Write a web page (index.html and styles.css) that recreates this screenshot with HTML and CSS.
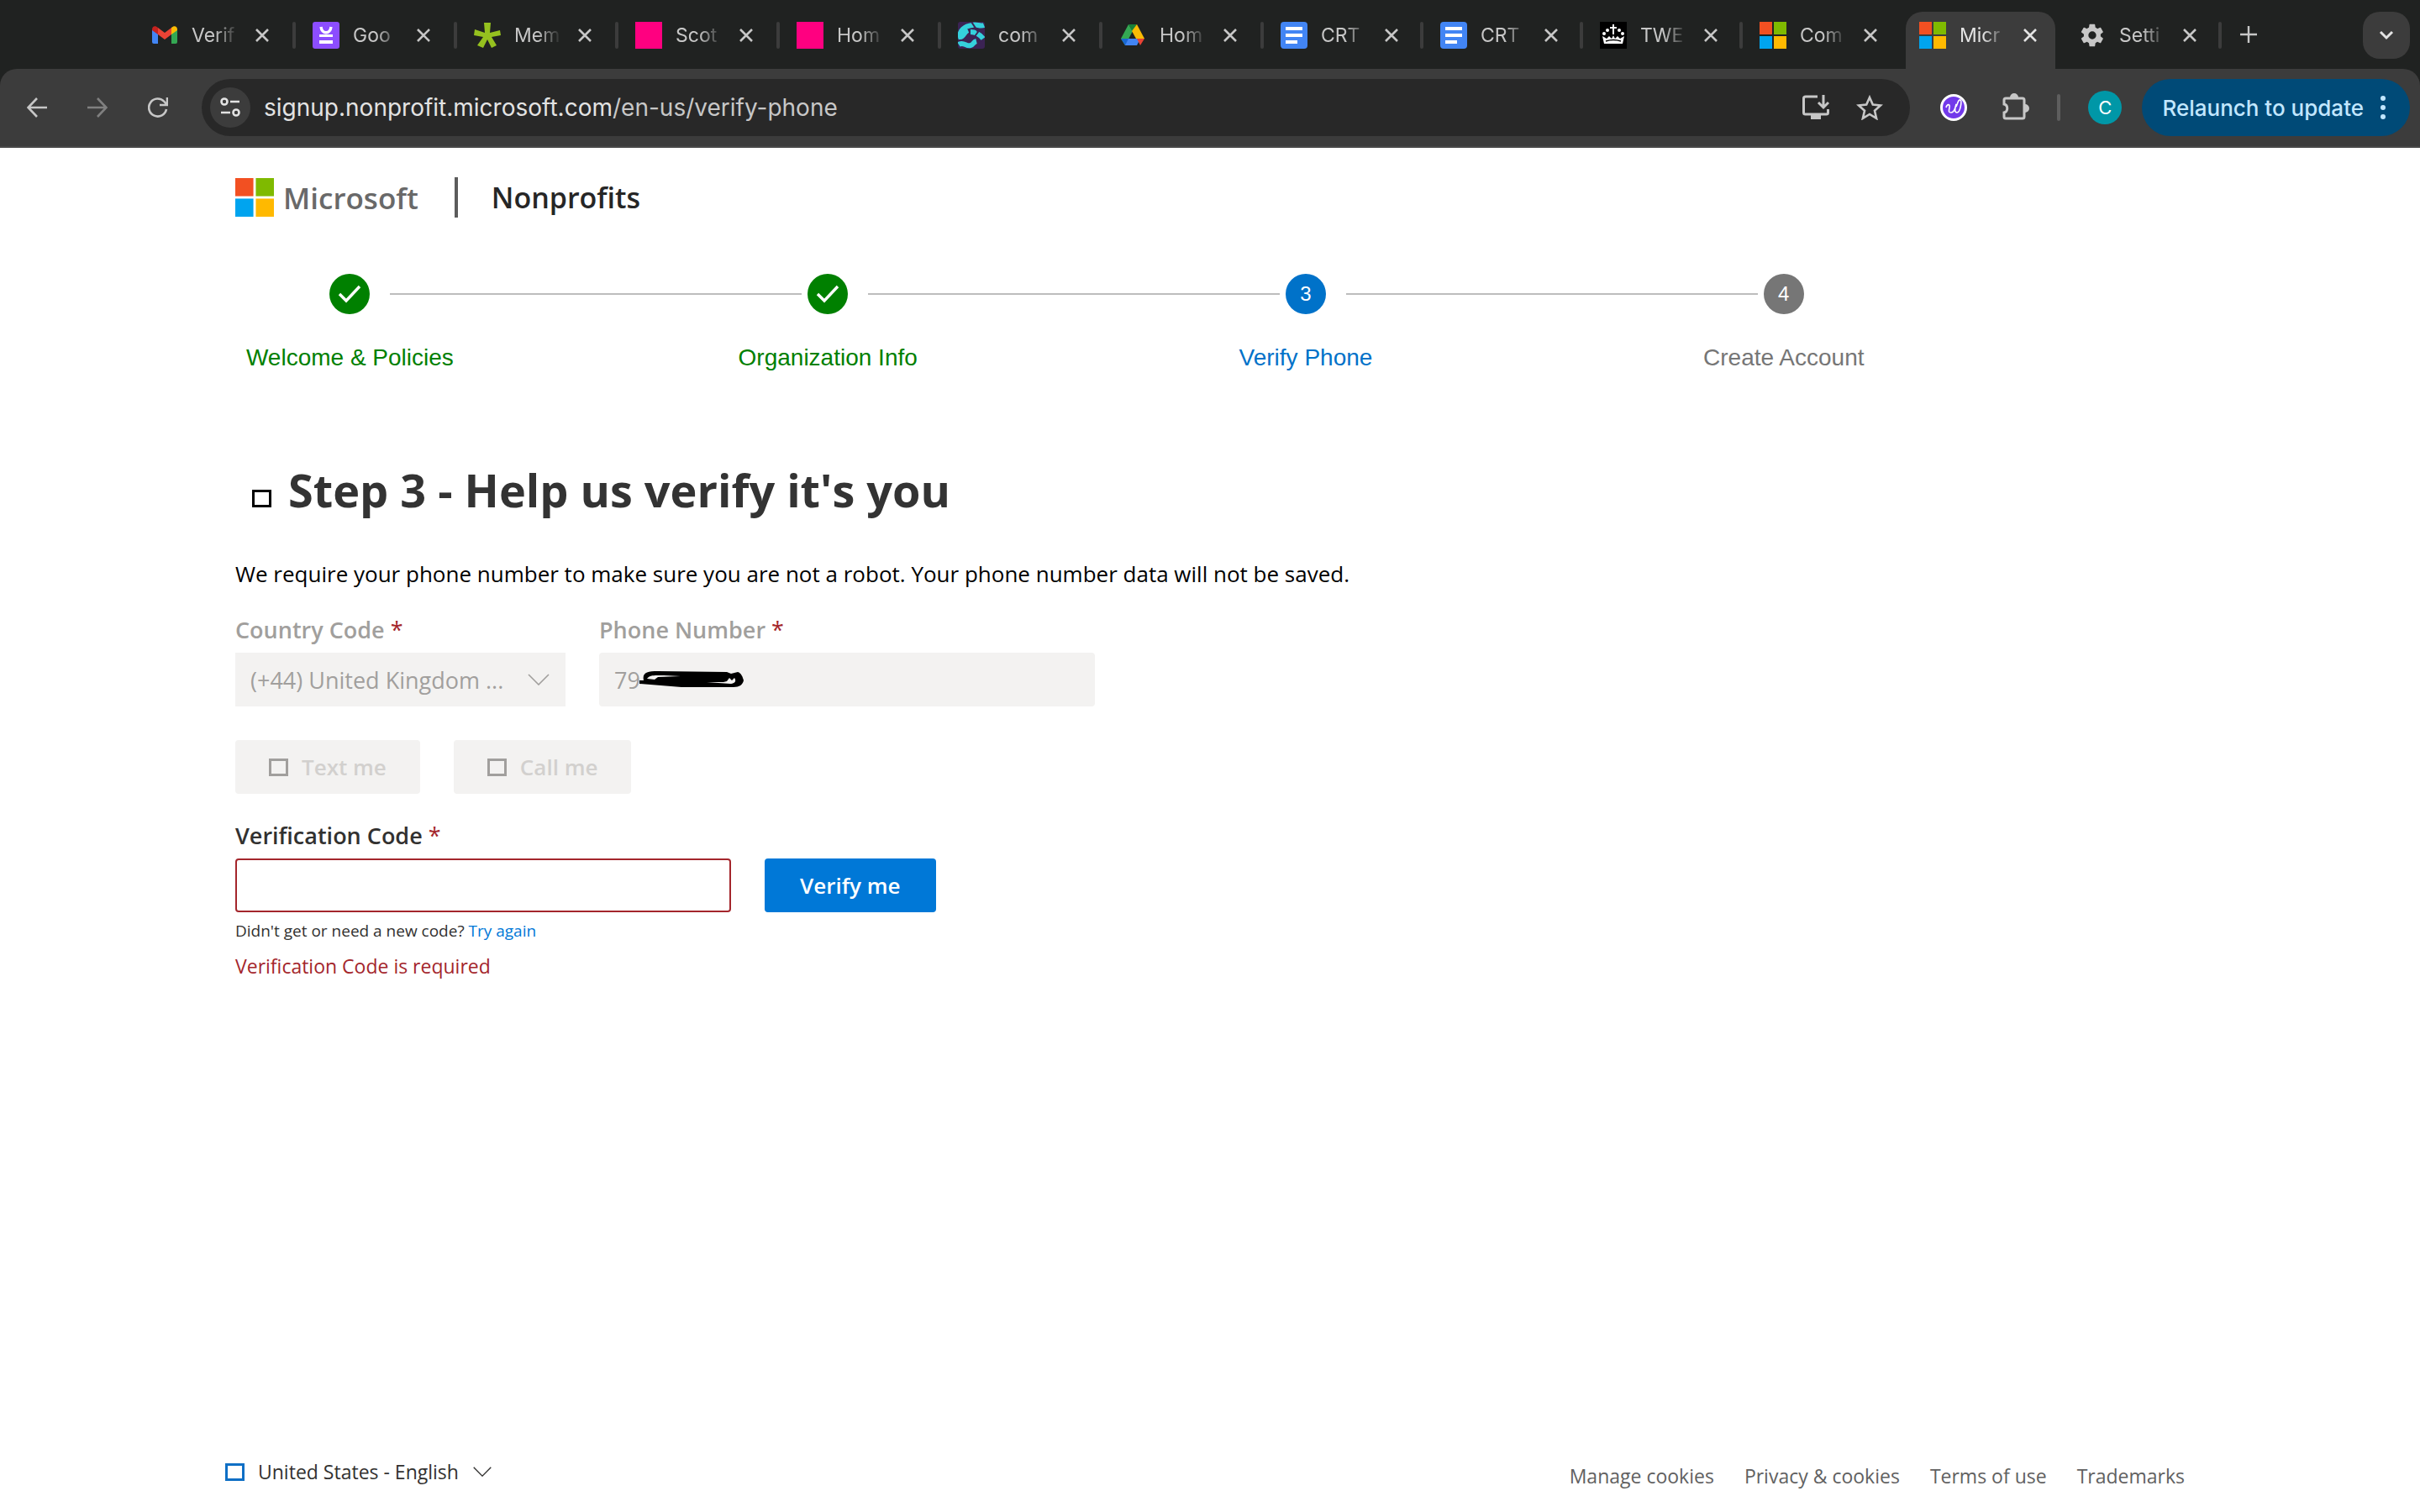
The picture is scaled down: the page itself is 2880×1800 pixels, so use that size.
FILE: index.html
```
<!DOCTYPE html>
<html lang="en">
<head>
    <meta charset="UTF-8">
    <meta name="viewport" content="width=device-width, initial-scale=1.0">
    <title>Microsoft Nonprofits - Verify Phone</title>
    <link rel="stylesheet" href="styles.css">
</head>
<body>
    <!-- shared icons -->
    <svg class="sprite" aria-hidden="true">
        <symbol id="close" viewBox="0 0 16 16"><path d="M1 1l14 14M15 1L1 15" fill="none" stroke="currentColor" stroke-width="2.6"/></symbol>
        <symbol id="ms" viewBox="0 0 32 32">
            <path fill="#f25022" d="M0 0h15v15H0z"/><path fill="#7fba00" d="M17 0h15v15H17z"/>
            <path fill="#00a4ef" d="M0 17h15v15H0z"/><path fill="#ffb900" d="M17 17h15v15H17z"/>
        </symbol>
        <symbol id="docs" viewBox="0 0 32 32"><rect width="32" height="32" rx="4" fill="#4285f4"/><path d="M6 6h20v4H6zM6 14h20v4H6zM6 22h14v4H6z" fill="#fff"/></symbol>
        <symbol id="chevron" viewBox="0 0 26 14"><path d="M1 1l12 12L25 1" fill="none" stroke="currentColor" stroke-width="1.6"/></symbol>
        <symbol id="check" viewBox="0 0 28 22"><path d="M2 11l8 8L26 2" fill="none" stroke="#fff" stroke-width="3.4"/></symbol>
    </svg>

    <div class="browser">
        <div class="tab-strip">
            <div class="tab">
                <svg class="favicon" viewBox="0 0 32 32"><path fill="#4285f4" d="M1 9v15a2 2 0 0 0 2 2h5V14z"/><path fill="#34a853" d="M31 9v15a2 2 0 0 1-2 2h-5V14z"/><path fill="#ea4335" d="M8 7l8 6 8-6v8l-8 6-8-6z"/><path fill="#c5221f" d="M1 9c0-4 4-5 7-2v8l-7-5z"/><path fill="#fbbc04" d="M31 9c0-4-4-5-7-2v8l7-5z"/></svg>
                <span class="tab-title">Verif</span>
                <button class="tab-close" aria-label="Close tab"><svg><use href="#close"/></svg></button>
            </div>
            <div class="tab">
                <svg class="favicon" viewBox="0 0 32 32"><rect width="32" height="32" rx="3" fill="#8c4dff"/><path d="M10 6c1 9 11 9 12 0" fill="none" stroke="#fff" stroke-width="3.4"/><path fill="#fff" d="M8 15h16v3H8zM8 22h16v4H8z"/></svg>
                <span class="tab-title">Goo</span>
                <button class="tab-close" aria-label="Close tab"><svg><use href="#close"/></svg></button>
            </div>
            <div class="tab">
                <svg class="favicon" viewBox="0 0 32 32"><path fill="#95c11f" d="M12 1h8l-1 12 12-3 1 6-11 2 6 10-6 3-5-10-5 10-7-3 7-10-11-2 1-7 12 4z"/></svg>
                <span class="tab-title">Mem</span>
                <button class="tab-close" aria-label="Close tab"><svg><use href="#close"/></svg></button>
            </div>
            <div class="tab">
                <span class="favicon pink"></span>
                <span class="tab-title">Scot</span>
                <button class="tab-close" aria-label="Close tab"><svg><use href="#close"/></svg></button>
            </div>
            <div class="tab">
                <span class="favicon pink"></span>
                <span class="tab-title">Hom</span>
                <button class="tab-close" aria-label="Close tab"><svg><use href="#close"/></svg></button>
            </div>
            <div class="tab">
                <svg class="favicon" viewBox="0 0 32 32"><rect width="32" height="32" rx="3" fill="#3b2354"/><path d="M31 4c-5 2-9-2-14 0C8 5 1 11 3 18c4 0 4-6 9-8M15 12c5 0 11 3 15 8M1 27c6-4 9 3 14 1 4-1 3-4 7-5" fill="none" stroke="#35d0dc" stroke-width="6"/><path d="M16 0l8 12-6 8" fill="none" stroke="#3b2354" stroke-width="2"/></svg>
                <span class="tab-title">com</span>
                <button class="tab-close" aria-label="Close tab"><svg><use href="#close"/></svg></button>
            </div>
            <div class="tab">
                <svg class="favicon" viewBox="0 0 32 32"><path fill="#34a853" d="M11 3l5 8-9 17-5-8z"/><path fill="#188038" d="M11 3h10l-5 9z"/><path fill="#fbbc04" d="M21 3l9 17H20l-5-9z"/><path fill="#4285f4" d="M7 20h18l-4 8H7z"/><path fill="#1967d2" d="M2 20h9l-4 8z"/><path fill="#ea4335" d="M21 20h9l-5 8z"/></svg>
                <span class="tab-title">Hom</span>
                <button class="tab-close" aria-label="Close tab"><svg><use href="#close"/></svg></button>
            </div>
            <div class="tab narrow">
                <svg class="favicon"><use href="#docs"/></svg>
                <span class="tab-title">CRT</span>
                <button class="tab-close" aria-label="Close tab"><svg><use href="#close"/></svg></button>
            </div>
            <div class="tab narrow">
                <svg class="favicon"><use href="#docs"/></svg>
                <span class="tab-title">CRT</span>
                <button class="tab-close" aria-label="Close tab"><svg><use href="#close"/></svg></button>
            </div>
            <div class="tab narrow">
                <svg class="favicon" viewBox="0 0 32 32"><path d="M0 0h32v32H0z"/><g fill="#fff"><path d="M5 26L3 17l5 3 3-3 3 3 2-4 2 4 3-3 3 3 5-3-2 9z"/><path d="M15 3h2v3h3v2h-3v7h-2V8h-3V6h3z"/><circle cx="5" cy="14" r="2"/><circle cx="9" cy="10" r="2"/><circle cx="23" cy="10" r="2"/><circle cx="27" cy="14" r="2"/></g><path d="M7 23q9-3 18 0" fill="none" stroke="#000" stroke-width="1.4"/></svg>
                <span class="tab-title">TWE</span>
                <button class="tab-close" aria-label="Close tab"><svg><use href="#close"/></svg></button>
            </div>
            <div class="tab narrow no-line">
                <svg class="favicon"><use href="#ms"/></svg>
                <span class="tab-title">Com</span>
                <button class="tab-close" aria-label="Close tab"><svg><use href="#close"/></svg></button>
            </div>
            <div class="tab narrow no-line active">
                <svg class="favicon"><use href="#ms"/></svg>
                <span class="tab-title">Micr</span>
                <button class="tab-close" aria-label="Close tab"><svg><use href="#close"/></svg></button>
            </div>
            <div class="tab narrow">
                <svg class="favicon" viewBox="0 0 24 24"><path fill="#c7c7c7" d="M19.4 13a7.500 7.500 0 0 0 0-2l2.100-1.600a.5.5 0 0 0 .1-.6l-2-3.500a.5.5 0 0 0-.6-.2l-2.500 1a7.300 7.300 0 0 0-1.700-1l-.4-2.600a.5.5 0 0 0-.5-.5h-4a.5.5 0 0 0-.5.500L9 5.100a7.600 7.600 0 0 0-1.700 1l-2.500-1a.5.5 0 0 0-.6.2l-2 3.500a.5.5 0 0 0 .1.600L4.500 11a8 8 0 0 0 0 2l-2.200 1.600a.5.5 0 0 0-.1.600l2 3.500c.1.200.4.300.6.200l2.500-1c.5.400 1.100.7 1.700 1l.4 2.600c0 .3.200.5.500.5h4c.3 0 .5-.2.500-.5l.4-2.600a7.300 7.300 0 0 0 1.700-1l2.500 1c.2.100.5 0 .6-.2l2-3.500a.5.5 0 0 0-.1-.6zM12 15.500a3.500 3.500 0 1 1 0-7 3.500 3.500 0 0 1 0 7z"/></svg>
                <span class="tab-title">Setti</span>
                <button class="tab-close" aria-label="Close tab"><svg><use href="#close"/></svg></button>
            </div>
            <button class="new-tab" aria-label="New tab"><svg viewBox="0 0 20 20" width="20" height="20"><path d="M10 0v20M0 10h20" stroke="currentColor" stroke-width="2.400"/></svg></button>
            <button class="tab-search" aria-label="Search tabs"><svg viewBox="0 0 18 12" width="18" height="12"><path d="M2 2l7 7 7-7" fill="none" stroke="currentColor" stroke-width="3"/></svg></button>
        </div>

        <div class="toolbar">
            <button class="nav-btn" aria-label="Back"><svg viewBox="0 0 24 24" width="24" height="24"><path d="M24 12H2M12 1L1.500 12 12 23" fill="none" stroke="currentColor" stroke-width="2.600"/></svg></button>
            <button class="nav-btn dim" aria-label="Forward"><svg viewBox="0 0 24 24" width="24" height="24"><path d="M0 12h22M12 1l10.500 11L12 23" fill="none" stroke="currentColor" stroke-width="2.600"/></svg></button>
            <button class="nav-btn" aria-label="Reload"><svg viewBox="0 0 24 24" width="24" height="24"><path d="M22 14a10.500 10.500 0 1 1-2.500-9l3 3.500M23 0v9h-9" fill="none" stroke="currentColor" stroke-width="2.600"/></svg></button>
            <div class="omnibox">
                <button class="site-info" aria-label="Site information"><svg viewBox="0 0 24 24" width="24" height="24" fill="none" stroke="currentColor" stroke-width="2.600"><circle cx="5" cy="5" r="3.500"/><path d="M12 5h11M1 18h11"/><circle cx="19" cy="18" r="3.500"/></svg></button>
                <span class="url">signup.nonprofit.microsoft.com<span class="path">/en-us/verify-phone</span></span>
                <button class="omni-btn" aria-label="Install app"><svg viewBox="0 0 32 30" width="32" height="30"><path d="M18 2H4Q1.500 2 1.500 4v17q0 2 2 2h25q2 0 2-2v-4" fill="none" stroke="currentColor" stroke-width="3"/><path d="M10 23h12v6H10z" fill="currentColor"/><path d="M25 0v14M19 9l6 6 6-6" fill="none" stroke="currentColor" stroke-width="3"/></svg></button>
                <button class="omni-btn" aria-label="Bookmark this tab"><svg viewBox="0 0 32 30" width="32" height="30"><path d="M16 3l3.800 8.600 9.200.9-7 6.200 2.100 9.200-8.100-4.900-8.100 4.900L10 18.700l-7-6.200 9.200-.9z" fill="none" stroke="currentColor" stroke-width="2.600"/></svg></button>
            </div>
            <button class="ext-btn" aria-label="Extension"><svg viewBox="0 0 32 32" width="32" height="32"><circle cx="16" cy="16" r="14.500" fill="#7239ea" stroke="#fff" stroke-width="3"/><path d="M7 16c1-4 5-5 4 0s-1 6 2 6 5-5 6-10c-2 6-2 10 1 10 4 0 6-14 4-15s-3 3-5 8" fill="none" stroke="#fff" stroke-width="1.600"/></svg></button>
            <button class="ext-btn" aria-label="Extensions"><svg viewBox="0 0 34 34" width="34" height="34"><path d="M5 6h20q2 0 2 2v20q0 2-2 2H5q-2 0-2-2v-5c5-1 5-9 0-10V8q0-2 2-2z" fill="none" stroke="currentColor" stroke-width="3"/><path d="M10 5a5 5 0 0 1 10 0zM28 13a5 5 0 0 1 0 10z" fill="currentColor"/></svg></button>
            <span class="toolbar-line"></span>
            <button class="avatar" aria-label="Profile">C</button>
            <button class="relaunch">Relaunch to update
                <svg viewBox="0 0 6 28" width="6" height="28" fill="currentColor"><circle cx="3" cy="3" r="3"/><circle cx="3" cy="14" r="3"/><circle cx="3" cy="25" r="3"/></svg>
            </button>
        </div>
    </div>

    <header class="header">
        <svg class="ms-logo"><use href="#ms"/></svg>
        <span class="wordmark">Microsoft</span>
        <span class="header-line"></span>
        <a class="site-name" href="#">Nonprofits</a>
    </header>

    <ol class="steps">
        <li class="step done">
            <div class="marker"><span class="dot"><svg width="28" height="22"><use href="#check"/></svg></span><span class="line after"></span></div>
            <span>Welcome &amp; Policies</span>
        </li>
        <li class="step done">
            <div class="marker"><span class="line before"></span><span class="dot"><svg width="28" height="22"><use href="#check"/></svg></span><span class="line after"></span></div>
            <span>Organization Info</span>
        </li>
        <li class="step current">
            <div class="marker"><span class="line before"></span><span class="dot">3</span><span class="line after"></span></div>
            <span>Verify Phone</span>
        </li>
        <li class="step">
            <div class="marker"><span class="line before"></span><span class="dot">4</span></div>
            <span>Create Account</span>
        </li>
    </ol>

    <main class="content">
        <h1><span class="box"></span>Step 3 - Help us verify it's you</h1>
        <p class="intro">We require your phone number to make sure you are not a robot. Your phone number data will not be saved.</p>

        <form>
            <div class="row">
                <div class="field country disabled">
                    <label for="country">Country Code <span class="star">*</span></label>
                    <div class="select">
                        <select id="country" disabled>
                            <option>(+44) United Kingdom ...</option>
                        </select>
                        <svg width="26" height="14"><use href="#chevron"/></svg>
                    </div>
                </div>
                <div class="field disabled">
                    <label for="phone">Phone Number <span class="star">*</span></label>
                    <div class="phone">
                        <input type="text" id="phone" value="79" disabled>
                        <svg class="scribble" viewBox="0 0 124 20" width="124" height="20"><path d="M0 11h5C3 2 9 0 22 0l82 1 5 2 8-2c4 1 6 6 7 10-1 5-5 8-12 8H50L0 15zM9 9c3-5 10-4 20-4l20 1-27 1-4 3zM80 13h20l4-1 3-4 3 3 3-3c3 4 0 7-5 7z" fill-rule="evenodd"/></svg>
                    </div>
                </div>
            </div>

            <div class="row buttons">
                <button type="button" class="btn" disabled><span class="box"></span>Text me</button>
                <button type="button" class="btn" disabled><span class="box"></span>Call me</button>
            </div>

            <div class="row verify">
                <div class="field">
                    <label for="code">Verification Code <span class="star">*</span></label>
                    <input type="text" id="code" class="invalid">
                </div>
                <button type="submit" class="btn primary">Verify me</button>
            </div>
            <p class="note">Didn't get or need a new code? <a href="#">Try again</a></p>
            <p class="error">Verification Code is required</p>
        </form>
    </main>

    <footer class="footer">
        <button class="language"><span class="box"></span>United States - English <svg width="24" height="12"><use href="#chevron"/></svg></button>
        <nav class="links">
            <a href="#">Manage cookies</a>
            <a href="#">Privacy &amp; cookies</a>
            <a href="#">Terms of use</a>
            <a href="#">Trademarks</a>
        </nav>
    </footer>
</body>
</html>
```
FILE: styles.css
```
* {
    box-sizing: border-box;
}
body {
    margin: 0;
    min-height: 100vh;
    display: flex;
    flex-direction: column;
    background: #fff;
    font-family: 'Open Sans', sans-serif;
    font-size: 26px;
    color: #323130;
}
button {
    padding: 0;
    border: none;
    background: none;
    color: inherit;
    font: inherit;
}
svg {
    display: block;
}
a {
    color: inherit;
    text-decoration: none;
}
.sprite {
    display: none;
}

/* browser */
.browser {
    background: #202221;
    color: #c7c7c7;
    font-family: Inter, sans-serif;
}
.tab-strip {
    height: 82px;
    padding: 14px 12px 0 160px;
    display: flex;
    font-size: 23px;
}
.tab {
    width: 192px;
    height: 56px;
    padding-left: 20px;
    display: flex;
    align-items: center;
}
.tab.narrow {
    width: 190px;
}
.tab::after {
    content: "";
    width: 4px;
    height: 32px;
    margin-left: auto;
    border-radius: 2px;
    background: #3c3c3c;
}
.tab.no-line::after {
    background: none;
}
.tab.active {
    width: 178px;
    height: 68px;
    margin: 0 8px 0 4px;
    padding: 0 0 12px 16px;
    border-radius: 20px 20px 0 0;
    background: #3c3c3c;
    color: #e3e3e3;
}
.favicon {
    width: 32px;
    height: 32px;
    flex: none;
}
.pink {
    background: #ff0080;
}
.tab-title {
    width: 56px;
    margin-left: 16px;
    overflow: hidden;
    white-space: nowrap;
    -webkit-mask-image: linear-gradient(to right, #000 50%, transparent);
    mask-image: linear-gradient(to right, #000 50%, transparent);
}
.tab-close {
    margin-left: 20px;
}
.tab-close svg {
    width: 16px;
    height: 16px;
}
.new-tab {
    height: 54px;
    margin-left: 22px;
}
.tab-search {
    width: 56px;
    height: 56px;
    margin-left: auto;
    display: grid;
    place-items: center;
    border-radius: 20px;
    background: #3c3c3c;
    color: #e3e3e3;
}
.toolbar {
    height: 94px;
    padding: 0 12px 0 8px;
    display: flex;
    align-items: center;
    border-bottom: 2px solid #484848;
    border-radius: 20px 20px 0 0;
    background: #3c3c3c;
}
.nav-btn {
    width: 72px;
    height: 56px;
    display: grid;
    place-items: center;
}
.dim {
    color: #808080;
}
.omnibox {
    flex: 1;
    height: 68px;
    margin-left: 16px;
    padding: 0 16px 0 10px;
    display: flex;
    align-items: center;
    border-radius: 34px;
    background: #282828;
}
.site-info {
    width: 48px;
    height: 48px;
    display: grid;
    place-items: center;
    border-radius: 50%;
    background: #3c3c3c;
    color: #e3e3e3;
}
.url {
    flex: 1;
    margin-left: 16px;
    color: #e3e3e3;
    font-size: 28px;
}
.path {
    color: #c7c7c7;
}
.omni-btn {
    width: 64px;
    display: grid;
    place-items: center;
}
.ext-btn {
    width: 74px;
    display: grid;
    place-items: center;
}
.omnibox + .ext-btn {
    margin-left: 15px;
}
.toolbar-line {
    width: 4px;
    height: 32px;
    margin: 0 33px 0 12px;
    border-radius: 2px;
    background: #5e5e5e;
}
.avatar {
    width: 40px;
    height: 40px;
    border-radius: 50%;
    background: #0097a7;
    color: #fff;
    font-size: 22px;
}
.relaunch {
    height: 68px;
    margin-left: 24px;
    padding: 0 29px 0 24px;
    display: flex;
    align-items: center;
    gap: 20px;
    border-radius: 34px;
    background: #004a77;
    color: #c2e7ff;
    font-size: 26px;
    font-weight: 500;
}

/* page header */
.header {
    height: 56px;
    margin: 31px 280px 0;
    display: flex;
    align-items: center;
}
.ms-logo {
    width: 46px;
    height: 46px;
}
.wordmark {
    margin-left: 11px;
    color: #696969;
    font-size: 35px;
    font-weight: 600;
}
.header-line {
    width: 4px;
    height: 48px;
    margin: 0 40px 0 43px;
    background: #5c5c5c;
}
.site-name {
    color: #262626;
    font-size: 34px;
    font-weight: 600;
}

/* steps */
.steps {
    width: 79%;
    margin: 63px 0 0 132px;
    padding: 0;
    display: grid;
    grid-template-columns: repeat(4, 1fr);
    list-style: none;
    font-family: 'Liberation Sans', sans-serif;
    font-size: 28px;
    line-height: 40px;
    text-align: center;
    color: #767676;
}
.marker {
    margin-bottom: 32px;
    display: grid;
    grid-template-columns: 1fr 48px 1fr;
    align-items: center;
}
.dot {
    grid-column: 2;
    width: 48px;
    height: 48px;
    display: grid;
    place-items: center;
    border-radius: 50%;
    background: #767676;
    color: #fff;
    font-size: 24px;
}
.line {
    height: 2px;
    background: #bdbdbd;
}
.before {
    margin-right: 7px;
}
.after {
    margin-left: 24px;
}
.done {
    color: #008000;
}
.done .dot {
    background: #008000;
}
.current {
    color: #0072c9;
}
.current .dot {
    background: #0072c9;
}

/* form */
.content {
    flex: 1;
    padding: 97px 280px 0;
}
.box {
    width: 23px;
    height: 21px;
    flex: none;
    border: 3px solid currentColor;
}
h1 {
    margin: 0;
    padding-left: 20px;
    display: flex;
    align-items: baseline;
    gap: 20px;
    color: #333;
    font-size: 54px;
    line-height: 80px;
}
h1 .box {
    color: #000;
}
.intro {
    margin: 40px 0 27px;
    color: #000;
    line-height: 40px;
}
.row {
    display: flex;
    gap: 40px;
}
.field {
    width: 590px;
}
.country {
    width: 393px;
}
label {
    display: block;
    margin-bottom: 7px;
    font-size: 27px;
    line-height: 40px;
    font-weight: 600;
}
.star {
    color: #a4262c;
    font-weight: 400;
}
.disabled label {
    color: #a19f9d;
}
input,
select {
    width: 100%;
    height: 64px;
    padding: 0 18px;
    display: block;
    appearance: none;
    border: none;
    border-radius: 4px;
    background: #fff;
    font: inherit;
    font-size: 27px;
}
input:disabled,
select:disabled {
    background: #f3f2f1;
    color: #a19f9d;
    opacity: 1;
}
select {
    border-radius: 0;
}
.select,
.phone {
    display: grid;
    align-items: center;
}
.select > *,
.phone > * {
    grid-area: 1 / 1;
}
.select svg {
    margin-right: 19px;
    justify-self: end;
    color: #a19f9d;
    pointer-events: none;
}
.scribble {
    margin-left: 48px;
}
.invalid {
    border: 2px solid #a4262c;
}
.buttons {
    margin: 40px 0 30px;
}
.btn {
    height: 64px;
    padding: 0 42px;
    display: flex;
    align-items: center;
    gap: 16px;
    border-radius: 4px;
    background: #f3f2f1;
    color: #d2d0ce;
    font-weight: 600;
}
.btn:disabled {
    padding: 0 40px;
}
.btn .box {
    color: #a19f9d;
}
.verify {
    align-items: flex-end;
}
.primary {
    background: #0078d7;
    color: #fff;
}
.note {
    margin: 8px 0 12px;
    font-size: 19px;
    line-height: 28px;
}
.note a {
    color: #0078d7;
}
.error {
    margin: 0;
    color: #a4262c;
    font-size: 23px;
    line-height: 32px;
}

/* footer */
.footer {
    padding: 0 280px 27px 268px;
    display: flex;
    justify-content: space-between;
    align-items: flex-end;
    font-size: 23px;
    line-height: 32px;
}
.language {
    padding-bottom: 5px;
    display: flex;
    align-items: center;
    gap: 16px;
}
.language .box {
    color: #0f6fc5;
}
.links {
    display: flex;
    gap: 36px;
    color: #616161;
}
```
